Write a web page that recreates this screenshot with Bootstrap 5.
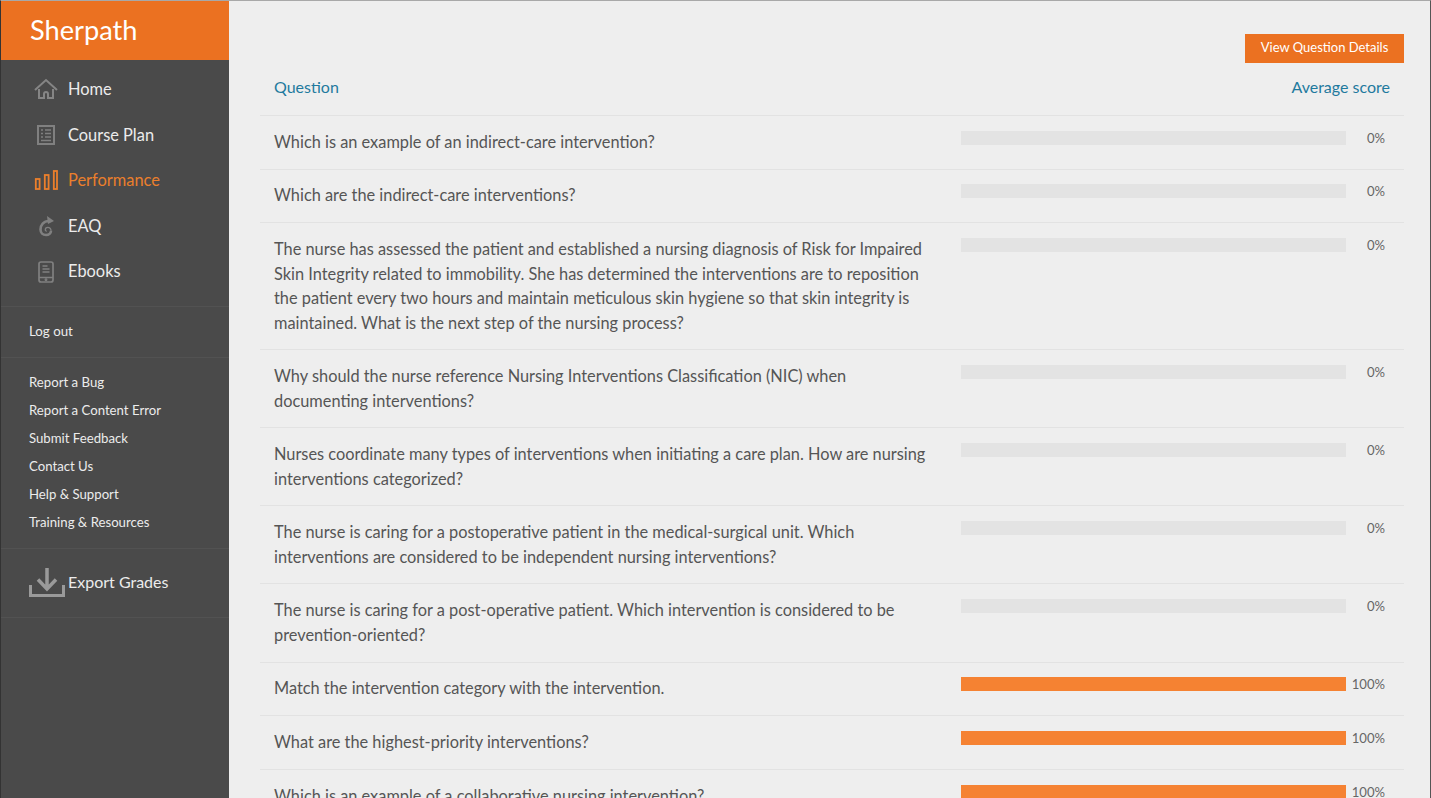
<!DOCTYPE html>
<html lang="en">
<head>
  <meta charset="UTF-8" />
  <title>Sherpath - Performance</title>
  <link href="https://cdn.jsdelivr.net/npm/bootstrap@5.3.0/dist/css/bootstrap.min.css" rel="stylesheet" />
  <style>
    html, body { height: 100%; }
    body {
      font-family: "Lato", "Noto Sans", sans-serif;
      background: #eeeeee;
      color: #555;
      overflow: hidden;
    }
    .app-shell {
      height: 798px;
      border-top: 1px solid #a8a8a8;
      border-left: 1px solid #333;
      border-right: 1px solid #555;
      overflow: hidden;
    }
    .side {
      width: 228px;
      flex: none;
      background: #4a4a4a;
      color: #ececec;
    }
    .side a { color: inherit; text-decoration: none; }
    .side-brand {
      height: 59px;
      background: #eb7121;
      color: #fff;
      font-size: 27.2px;
      line-height: 58px;
      padding-left: 29px;
    }
    .side-main { padding: 6.5px 0 11.5px; border-bottom: 1px solid #525252; }
    .side-main a {
      display: flex;
      align-items: center;
      height: 45.6px;
      font-size: 16.4px;
      padding-left: 33px;
    }
    .side-main svg { width: 24px; height: 24px; margin-right: 10px; flex: none; }
    .side-main a.on { color: #eb7f2c; }
    .side-logout { height: 51px; border-bottom: 1px solid #525252; font-size: 13.3px; line-height: 49px; padding-left: 28px; }
    .side-links { padding: 10px 0 12px 28px; border-bottom: 1px solid #525252; font-size: 13.2px; }
    .side-links a { display: block; line-height: 28px; }
    .side-export {
      height: 69px;
      border-bottom: 1px solid #525252;
      padding-left: 28px;
      font-size: 16px;
    }
    .side-export span { margin-bottom: 2px; }
    .side-export svg { width: 36px; height: 30px; margin-right: 3px; }
    .page { padding: 33px 26px 0 31px; min-width: 0; }
    .btn-details {
      background: #eb7121;
      color: #fff;
      border: 0;
      border-radius: 0;
      font-size: 13px;
      height: 29px;
      width: 159px;
      padding: 0 0 1px;
    }
    .btn-details:hover { background: #eb7121; color: #fff; }
    .head-row {
      height: 53px;
      padding: 0 14px 5px;
      color: #1f7a9e;
      font-size: 16px;
      border-bottom: 1px solid #e2e2e2;
    }
    .q-list { --bs-list-group-bg: transparent; --bs-list-group-color: #555; --bs-list-group-border-color: #e2e2e2; border-radius: 0; }
    .q-row {
      padding: 13.9px 18px 14.2px 14px;
      font-size: 16.35px;
      line-height: 24.5px;
    }
    .q-text { width: 661px; flex: none; }
    .q-score { margin-left: 26px; padding-top: 1px; }
    .q-bar { width: 385px; height: 14px; background: #e3e3e3; border-radius: 0; }
    .q-bar .progress-bar { background: #f58232; }
    .q-pct { width: 39px; text-align: right; font-size: 13.1px; line-height: 16px; color: #666; margin-top: -1px; }
  </style>
</head>
<body>
  <div class="app-shell d-flex">
    <aside class="side">
      <div class="side-brand">Sherpath</div>
      <nav class="side-main">
        <a href="#">
          <svg viewBox="0 0 24 24" fill="none" stroke="#858585" stroke-width="2"><path d="M1 13 12 3l11 10"/><path d="M5 12v9h5v-4a2 2 0 0 1 4 0v4h5v-9"/></svg>Home
        </a>
        <a href="#">
          <svg viewBox="0 0 24 24" fill="none" stroke="#808080" stroke-width="2"><rect x="4" y="3" width="16" height="18"/><path d="M7 7h2M11 7h6M7 10.5h2M11 10.5h6M7 14h2M11 14h6M7 17.5h10" stroke-width="1.4"/></svg>Course Plan
        </a>
        <a href="#" class="on">
          <svg viewBox="0 0 24 24" fill="none" stroke="#eb7f2c" stroke-width="1.8"><rect x="1.8" y="11" width="3.8" height="10"/><rect x="10.8" y="7" width="3.8" height="14"/><rect x="19.8" y="3" width="3.2" height="18"/></svg>Performance
        </a>
        <a href="#">
          <svg viewBox="0 0 24 24" fill="none" stroke="#808080"><path d="M15 7C9.5 7 6.5 11 6.5 15.5c0 3.5 2.5 5.5 5.500 5.5 3 0 5-2 5-4.3" stroke-width="2.6"/><path d="M17 16.700c0-2-1.500-3.300-3.200-3.300-1.500 0-2.500 1-2.500 2.300 0 1 .8 1.600 1.500 1.400" stroke-width="1.3"/><path d="M13 2l7 5-6 3z" fill="#808080" stroke="none"/></svg>EAQ
        </a>
        <a href="#">
          <svg viewBox="0 0 24 24" fill="none" stroke="#808080" stroke-width="1.7"><rect x="5" y="2" width="14" height="20" rx="2"/><path d="M5 17.5h14M8.5 6h5M8.5 9h7M8.5 12h7"/><circle cx="12" cy="19.8" r=".6"/></svg>Ebooks
        </a>
      </nav>
      <div class="side-logout"><a href="#">Log out</a></div>
      <div class="side-links">
        <a href="#">Report a Bug</a>
        <a href="#">Report a Content Error</a>
        <a href="#">Submit Feedback</a>
        <a href="#">Contact Us</a>
        <a href="#">Help &amp; Support</a>
        <a href="#">Training &amp; Resources</a>
      </div>
      <a href="#" class="side-export d-flex align-items-center">
        <svg viewBox="0 0 36 30" fill="none" stroke="#9a9a9a"><path d="M1.5 17v10.5h33V17" stroke-width="3"/><path d="M18 0v21M9 11.5l9 9.5 9-9.5" stroke-width="3.5"/></svg><span>Export Grades</span>
      </a>
    </aside>
    <main class="page flex-grow-1">
      <div class="d-flex justify-content-end">
        <button type="button" class="btn btn-details">View Question Details</button>
      </div>
      <div class="head-row d-flex justify-content-between align-items-center">
        <span>Question</span><span>Average score</span>
      </div>
      <div class="list-group list-group-flush q-list" id="rows"></div>
    </main>
  </div>
  <script>
    const rows = [
      ['Which is an example of an indirect-care intervention?', 0],
      ['Which are the indirect-care interventions?', 0],
      ['The nurse has assessed the patient and established a nursing diagnosis of Risk for Impaired Skin Integrity related to immobility. She has determined the interventions are to reposition the patient every two hours and maintain meticulous skin hygiene so that skin integrity is maintained. What is the next step of the nursing process?', 0],
      ['Why should the nurse reference Nursing Interventions Classification (NIC) when documenting interventions?', 0],
      ['Nurses coordinate many types of interventions when initiating a care plan. How are nursing interventions categorized?', 0],
      ['The nurse is caring for a postoperative patient in the medical-surgical unit. Which interventions are considered to be independent nursing interventions?', 0],
      ['The nurse is caring for a post-operative patient. Which intervention is considered to be prevention-oriented?', 0],
      ['Match the intervention category with the intervention.', 100],
      ['What are the highest-priority interventions?', 100],
      ['Which is an example of a collaborative nursing intervention?', 100]
    ];
    document.getElementById('rows').innerHTML = rows.map(([q, pct]) => `
      <div class="list-group-item q-row d-flex">
        <div class="q-text">${q}</div>
        <div class="q-score d-flex">
          <div class="progress q-bar"><div class="progress-bar" style="width: ${pct}%"></div></div>
          <div class="q-pct">${pct}%</div>
        </div>
      </div>`).join('');
  </script>
  <script src="https://cdn.jsdelivr.net/npm/bootstrap@5.3.0/dist/js/bootstrap.bundle.min.js"></script>
</body>
</html>
